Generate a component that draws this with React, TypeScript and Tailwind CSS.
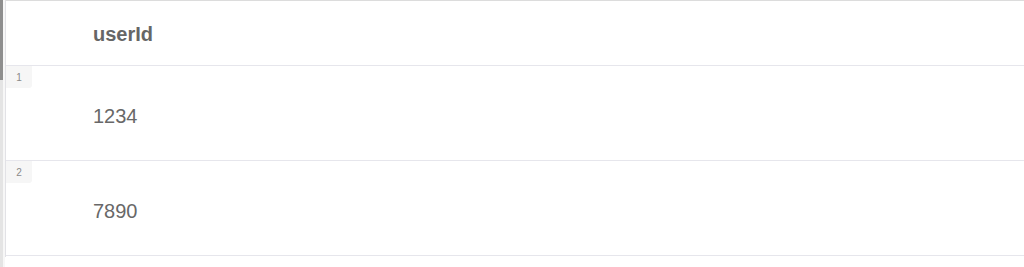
import React from "react";

const rows = [
  { n: 1, userId: "1234" },
  { n: 2, userId: "7890" },
];

function Row({ n, value }: { n: number; value: string }) {
  return (
    <div className="relative flex h-[95px] items-center border-b border-[#e6e6ec] pl-[87px]">
      {/* row index badge */}
      <div className="absolute left-0 top-0 flex h-[22px] w-[26px] items-center justify-center rounded-br-[3px] bg-[#f6f6f6] text-[10px] text-[#8a8a8a]">
        {n}
      </div>
      <span className="pt-[5px] text-[20px] text-[#686868]">{value}</span>
    </div>
  );
}

export default function App() {
  return (
    <div
      className="flex h-[267px] w-[1024px] overflow-hidden bg-white"
      style={{ fontFamily: '"Liberation Sans", Arial, sans-serif' }}
    >
      {/* left edge scrollbar strip */}
      <div className="flex w-[3px] flex-col">
        <div className="h-[80px] bg-[#8e8e8e]" />
        <div className="flex-1 bg-[#e4e4e4]" />
      </div>
      <div className="w-[2px] bg-[#f7f7f7]" />

      {/* table card */}
      <div className="flex h-[257px] flex-1 flex-col border-l border-t border-[#e2e2e6] border-t-[#dcdcdc]">
        <div className="flex h-[65px] items-center border-b border-[#e6e6ec] pl-[87px]">
          <span className="pt-[1px] text-[20px] font-bold text-[#666666]">userId</span>
        </div>
        {rows.map((r) => (
          <Row key={r.n} n={r.n} value={r.userId} />
        ))}
      </div>
    </div>
  );
}
